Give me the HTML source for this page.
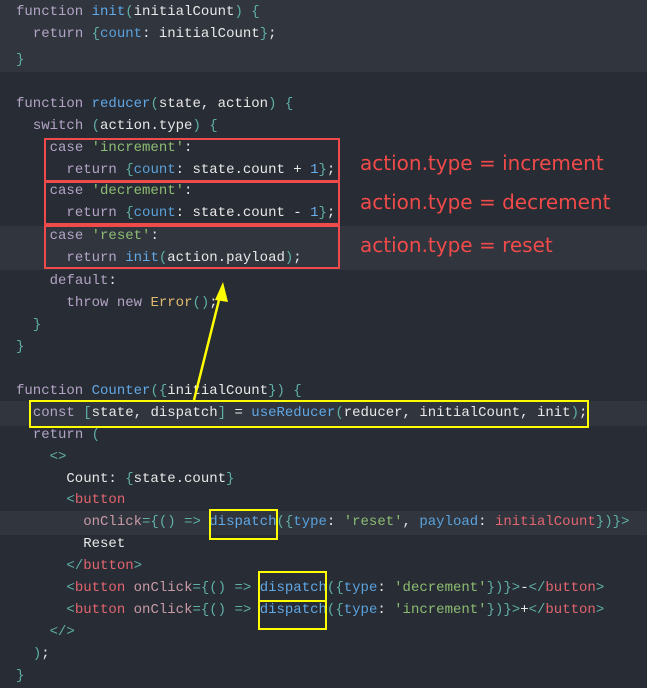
<!DOCTYPE html>
<html><head><meta charset="utf-8"><style>
body{margin:0;width:647px;height:688px;background:#282c34;overflow:hidden;position:relative;font-family:"Liberation Mono",monospace;font-size:14px;color:#e8e8e8}
.hl{position:absolute;left:0;width:647px;background:#30353e}
.l{position:absolute;left:16px;white-space:pre;height:22px;line-height:22px}
.k{color:#b3a4c6}.f{color:#61a8e6}.p{color:#5fb0a6}.s{color:#8dbd72}.n{color:#68aef0}.y{color:#e3bb6f}.t{color:#e2656f}.a{color:#c99aa6}.pr{color:#5aa2dc}
.box{position:absolute;border:2px solid;box-sizing:border-box}
.r{border-color:#f04a4a}.yb{border-color:#ffff00}
.ann{position:absolute;left:360px;font-family:"DejaVu Sans","Liberation Sans",sans-serif;font-size:20px;color:#f04a4a;white-space:pre}
</style></head><body>
<div class="hl" style="top:0;height:72px"></div>
<div class="hl" style="top:226px;height:44px"></div>
<div class="hl" style="top:401px;height:25px"></div>
<div class="hl" style="top:511px;height:24px"></div>

<div class="l" style="top:1px"><span class="k">function</span> <span class="f">init</span><span class="p">(</span>initialCount<span class="p">)</span> <span class="p">{</span></div>
<div class="l" style="top:23px">  <span class="k">return</span> <span class="p">{</span><span class="pr">count</span>: initialCount<span class="p">}</span>;</div>
<div class="l" style="top:49px"><span class="p">}</span></div>
<div class="l" style="top:93px"><span class="k">function</span> <span class="f">reducer</span><span class="p">(</span>state, action<span class="p">)</span> <span class="p">{</span></div>
<div class="l" style="top:115px">  <span class="k">switch</span> <span class="p">(</span>action.type<span class="p">)</span> <span class="p">{</span></div>
<div class="l" style="top:137px">    <span class="k">case</span> <span class="s">'increment'</span>:</div>
<div class="l" style="top:159px">      <span class="k">return</span> <span class="p">{</span><span class="pr">count</span>: state.count + <span class="n">1</span><span class="p">}</span>;</div>
<div class="l" style="top:180px">    <span class="k">case</span> <span class="s">'decrement'</span>:</div>
<div class="l" style="top:202px">      <span class="k">return</span> <span class="p">{</span><span class="pr">count</span>: state.count - <span class="n">1</span><span class="p">}</span>;</div>
<div class="l" style="top:225px">    <span class="k">case</span> <span class="s">'reset'</span>:</div>
<div class="l" style="top:247px">      <span class="k">return</span> <span class="f">init</span><span class="p">(</span>action.payload<span class="p">)</span>;</div>
<div class="l" style="top:270px">    <span class="k">default</span>:</div>
<div class="l" style="top:292px">      <span class="k">throw</span> <span class="k">new</span> <span class="y">Error</span><span class="p">()</span>;</div>
<div class="l" style="top:314px">  <span class="p">}</span></div>
<div class="l" style="top:336px"><span class="p">}</span></div>
<div class="l" style="top:380px"><span class="k">function</span> <span class="f">Counter</span><span class="p">({</span>initialCount<span class="p">})</span> <span class="p">{</span></div>
<div class="l" style="top:402px">  <span class="k">const</span> <span class="p">[</span>state, dispatch<span class="p">]</span> = <span class="f">useReducer</span><span class="p">(</span>reducer, initialCount, init<span class="p">)</span>;</div>
<div class="l" style="top:424px">  <span class="k">return</span> <span class="p">(</span></div>
<div class="l" style="top:446px">    <span class="p">&lt;&gt;</span></div>
<div class="l" style="top:468px">      Count: <span class="p">{</span>state.count<span class="p">}</span></div>
<div class="l" style="top:489px">      <span class="p">&lt;</span><span class="t">button</span></div>
<div class="l" style="top:511px">        <span class="a">onClick</span><span class="p">={()</span> <span class="p">=&gt;</span> <span class="f">dispatch</span><span class="p">({</span><span class="pr">type</span>: <span class="s">'reset'</span>, <span class="pr">payload</span>: <span class="t">initialCount</span><span class="p">})}&gt;</span></div>
<div class="l" style="top:533px">        Reset</div>
<div class="l" style="top:555px">      <span class="p">&lt;/</span><span class="t">button</span><span class="p">&gt;</span></div>
<div class="l" style="top:577px">      <span class="p">&lt;</span><span class="t">button</span> <span class="a">onClick</span><span class="p">={()</span> <span class="p">=&gt;</span> <span class="f">dispatch</span><span class="p">({</span><span class="pr">type</span>: <span class="s">'decrement'</span><span class="p">})}&gt;</span>-<span class="p">&lt;/</span><span class="t">button</span><span class="p">&gt;</span></div>
<div class="l" style="top:599px">      <span class="p">&lt;</span><span class="t">button</span> <span class="a">onClick</span><span class="p">={()</span> <span class="p">=&gt;</span> <span class="f">dispatch</span><span class="p">({</span><span class="pr">type</span>: <span class="s">'increment'</span><span class="p">})}&gt;</span>+<span class="p">&lt;/</span><span class="t">button</span><span class="p">&gt;</span></div>
<div class="l" style="top:621px">    <span class="p">&lt;/&gt;</span></div>
<div class="l" style="top:643px">  <span class="p">)</span>;</div>
<div class="l" style="top:665px"><span class="p">}</span></div>

<div class="box r" style="left:44px;top:138px;width:296px;height:44px"></div>
<div class="box r" style="left:44px;top:181px;width:296px;height:44px"></div>
<div class="box r" style="left:44px;top:225px;width:296px;height:44px"></div>
<div class="ann" style="top:151px">action.type = increment</div>
<div class="ann" style="top:190px">action.type = decrement</div>
<div class="ann" style="top:233px">action.type = reset</div>

<div class="box yb" style="left:29px;top:400px;width:560px;height:28px"></div>
<div class="box yb" style="left:209px;top:509px;width:69px;height:31px"></div>
<div class="box yb" style="left:258px;top:571px;width:69px;height:31px"></div>
<div class="box yb" style="left:258px;top:600px;width:69px;height:30px"></div>

<svg style="position:absolute;left:0;top:0" width="647" height="688">
<line x1="194" y1="400" x2="220" y2="296" stroke="#ffff00" stroke-width="2.5"/>
<polygon points="223,282 215,300 228,302" fill="#ffff00"/>
</svg>
</body></html>
